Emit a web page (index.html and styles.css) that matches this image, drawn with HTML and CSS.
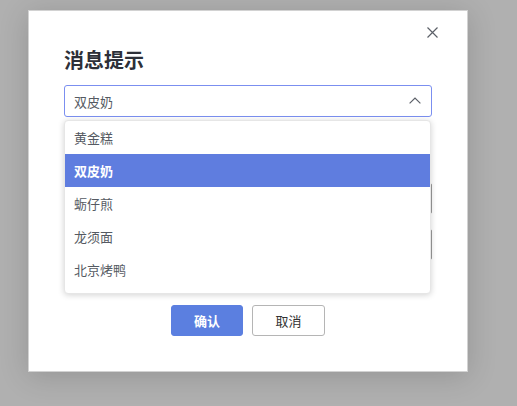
FILE: index.html
```html
<!DOCTYPE html>
<html lang="zh">
<head>
<meta charset="utf-8">
<title>消息提示</title>
<link rel="stylesheet" href="styles.css">
</head>
<body>
<div class="overlay">
  <div class="dialog">
    <div class="dialog-head">
      <button class="close" aria-label="关闭">
        <svg width="11" height="11" viewBox="0 0 11 11"><path d="M0.5 0.5L10.5 10.5M10.5 0.5L0.5 10.5" stroke="#5c6068" stroke-width="1.2" fill="none"/></svg>
      </button>
    </div>
    <h2 class="title">消息提示</h2>
    <div class="field">
      <div class="select">
        <span class="select-value">双皮奶</span>
        <svg class="chevron" width="12" height="7" viewBox="0 0 12 7"><path d="M0.6 6.4L6 1L11.4 6.4" stroke="#5c6068" stroke-width="1.2" fill="none"/></svg>
      </div>
      <ul class="menu">
        <li class="item">黄金糕</li>
        <li class="item active">双皮奶</li>
        <li class="item">蛎仔煎</li>
        <li class="item">龙须面</li>
        <li class="item">北京烤鸭</li>
      </ul>
    </div>
    <div class="input input-first"></div>
    <div class="input input-second"></div>
    <div class="actions">
      <button class="btn btn-primary">确认</button>
      <button class="btn btn-default">取消</button>
    </div>
  </div>
</div>
</body>
</html>
```

FILE: styles.css
```css
html, body {
  margin: 0;
  padding: 0;
}
body {
  width: 517px;
  height: 406px;
  background: #b0b0b0;
  font-family: "Noto Sans CJK SC", "Noto Sans", sans-serif;
  overflow: hidden;
}
.overlay {
  padding: 10px 0 0 28px;
}
.dialog {
  box-sizing: border-box;
  width: 440px;
  height: 362px;
  background: #fff;
  border: 1px solid #d2d2d2;
  box-shadow: 0 4px 28px rgba(0, 0, 0, 0.16);
  padding: 16px 35px 0 35px;
}
.dialog-head {
  display: flex;
  justify-content: flex-end;
  height: 11px;
  margin-right: -6px;
}
.close {
  border: 0;
  background: none;
  padding: 0;
  width: 11px;
  height: 11px;
  display: flex;
}
.title {
  margin: 8px 0 0 0;
  font-size: 20px;
  line-height: 28px;
  font-weight: bold;
  color: #2d3038;
}
.field {
  position: relative;
  margin-top: 11px;
}
.select {
  box-sizing: border-box;
  height: 32px;
  border: 1px solid #7b8ff0;
  border-radius: 3px;
  display: flex;
  align-items: center;
  justify-content: space-between;
  padding: 0 10px 0 9px;
}
.select-value {
  font-size: 13px;
  color: #555a62;
}
.chevron {
  display: block;
  margin-top: -1px;
}
.menu {
  position: absolute;
  top: 35px;
  left: 0;
  z-index: 2;
  box-sizing: border-box;
  width: 367px;
  height: 174px;
  margin: 0;
  padding: 0 0 7px 0;
  list-style: none;
  background: #fff;
  border: 1px solid #e6e6e6;
  border-radius: 4px;
  box-shadow: 0 1px 6px rgba(0, 0, 0, 0.18);
}
.item {
  height: 33px;
  line-height: 33px;
  padding-left: 9px;
  font-size: 13px;
  color: #555a62;
}
.item.active {
  background: #5f7ddf;
  color: #fff;
  font-weight: bold;
}
.input {
  box-sizing: border-box;
  height: 31px;
  border: 1px solid #9a9a9a;
  border-radius: 2px;
}
.input-first {
  margin-top: 66px;
}
.input-second {
  margin-top: 15px;
}
.actions {
  display: flex;
  justify-content: center;
  gap: 9px;
  margin-top: 45px;
}
.btn {
  box-sizing: border-box;
  width: 72px;
  height: 31px;
  border-radius: 3px;
  font-family: "Noto Sans CJK SC", "Noto Sans", sans-serif;
  font-size: 13px;
  padding: 0;
}
.btn-primary {
  background: #5b7fe0;
  border: 1px solid #5b7fe0;
  color: #fff;
  font-weight: bold;
}
.btn-default {
  width: 73px;
  background: #fff;
  border: 1px solid #b5b5b5;
  color: #333;
}
```
